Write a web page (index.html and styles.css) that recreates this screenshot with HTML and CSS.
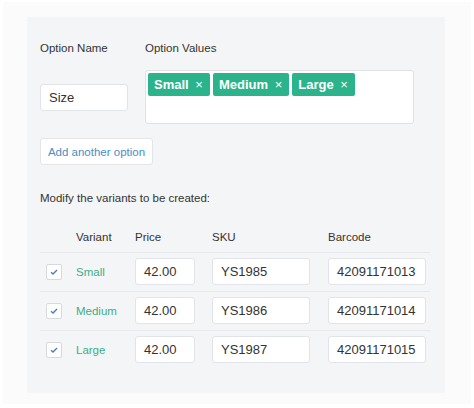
FILE: index.html
```html
<!DOCTYPE html>
<html lang="en">
<head>
    <meta charset="UTF-8">
    <title>Variants</title>
    <link rel="stylesheet" href="styles.css">
</head>
<body>
    <div class="frame">
        <div class="panel">
            <div class="options">
                <div class="label">Option Name</div>
                <div class="label">Option Values</div>
                <div class="field name-field">Size</div>
                <div class="values">
                    <span class="tag">Small <span class="x">&times;</span></span>
                    <span class="tag">Medium <span class="x">&times;</span></span>
                    <span class="tag">Large <span class="x">&times;</span></span>
                </div>
            </div>

            <button class="add-btn">Add another option</button>

            <p class="modify">Modify the variants to be created:</p>

            <table class="variants">
                <thead>
                    <tr>
                        <th class="col-check"></th>
                        <th class="col-variant">Variant</th>
                        <th class="col-price">Price</th>
                        <th class="col-sku">SKU</th>
                        <th>Barcode</th>
                    </tr>
                </thead>
                <tbody>
                    <tr>
                        <td><span class="check"><svg width="10" height="8" viewBox="0 0 10 8"><path d="M2 4.3 L4 6 L8 2" fill="none" stroke="#4a80b8" stroke-width="1.4"/></svg></span></td>
                        <td class="variant">Small</td>
                        <td><div class="field price">42.00</div></td>
                        <td><div class="field sku">YS1985</div></td>
                        <td><div class="field sku">42091171013</div></td>
                    </tr>
                    <tr>
                        <td><span class="check"><svg width="10" height="8" viewBox="0 0 10 8"><path d="M2 4.3 L4 6 L8 2" fill="none" stroke="#4a80b8" stroke-width="1.4"/></svg></span></td>
                        <td class="variant">Medium</td>
                        <td><div class="field price">42.00</div></td>
                        <td><div class="field sku">YS1986</div></td>
                        <td><div class="field sku">42091171014</div></td>
                    </tr>
                    <tr>
                        <td><span class="check"><svg width="10" height="8" viewBox="0 0 10 8"><path d="M2 4.3 L4 6 L8 2" fill="none" stroke="#4a80b8" stroke-width="1.4"/></svg></span></td>
                        <td class="variant">Large</td>
                        <td><div class="field price">42.00</div></td>
                        <td><div class="field sku">YS1987</div></td>
                        <td><div class="field sku">42091171015</div></td>
                    </tr>
                </tbody>
            </table>
        </div>
    </div>
</body>
</html>
```

FILE: styles.css
```css
body {
    margin: 0;
    background-color: #ffffff;
    font-family: "Liberation Sans", Arial, sans-serif;
    color: #333;
}
.frame {
    margin: 2px 3px 0;
    padding: 15px 26px 11px 24px;
    background-color: #fbfbfc;
}
.panel {
    width: 392px;
    padding: 24px 13px 24px 13px;
    background-color: #f4f5f7;
}
.options {
    display: grid;
    grid-template-columns: 88px 269px;
    column-gap: 17px;
    row-gap: 15px;
    align-items: center;
}
.label {
    font-size: 11.5px;
    line-height: 14px;
}
.field {
    box-sizing: border-box;
    height: 27px;
    line-height: 25px;
    padding: 0 8px;
    background-color: #fff;
    border: 1px solid #e1e4e8;
    border-radius: 3px;
    font-size: 13px;
    color: #333;
}
.values {
    box-sizing: border-box;
    height: 54px;
    padding: 2px;
    background-color: #fff;
    border: 1px solid #dfe2e6;
    border-radius: 3px;
    display: flex;
    align-items: flex-start;
    gap: 3px;
}
.tag {
    height: 23px;
    line-height: 23px;
    padding: 0 7px 0 6px;
    background-color: #2bb38b;
    color: #fff;
    font-size: 13px;
    font-weight: bold;
    border-radius: 2px;
}
.tag .x {
    font-weight: normal;
    font-size: 13px;
    margin-left: 3px;
}
.add-btn {
    display: block;
    margin-top: 14px;
    height: 27px;
    width: 113px;
    padding: 0;
    background-color: #fff;
    border: 1px solid #e3e5e9;
    border-radius: 3px;
    color: #4a8ec6;
    font-family: "Liberation Sans", Arial, sans-serif;
    font-size: 11.5px;
}
.modify {
    margin: 26px 0 0;
    font-size: 11.5px;
    line-height: 14px;
}
.variants {
    margin-top: 25px;
    width: 390px;
    border-collapse: collapse;
    font-size: 11.5px;
}
.variants th {
    text-align: left;
    font-weight: normal;
    line-height: 14px;
    padding: 0 0 8px;
    border-bottom: 1px solid #e6e8eb;
}
.variants td {
    padding: 5px 0 6px;
    border-bottom: 1px solid #e6e8eb;
    vertical-align: middle;
}
.variants tbody tr:last-child td {
    border-bottom: none;
}
.col-check { width: 36px; }
.col-variant { width: 59px; }
.col-price { width: 77px; }
.col-sku { width: 116px; }
.check {
    box-sizing: border-box;
    display: flex;
    align-items: center;
    justify-content: center;
    width: 16px;
    height: 16px;
    margin-left: 6px;
    background-color: #fff;
    border: 1px solid #d6d9dd;
    border-radius: 2px;
}
.variant {
    color: #41ad85;
}
.price {
    width: 60px;
}
.sku {
    width: 98px;
}
```
